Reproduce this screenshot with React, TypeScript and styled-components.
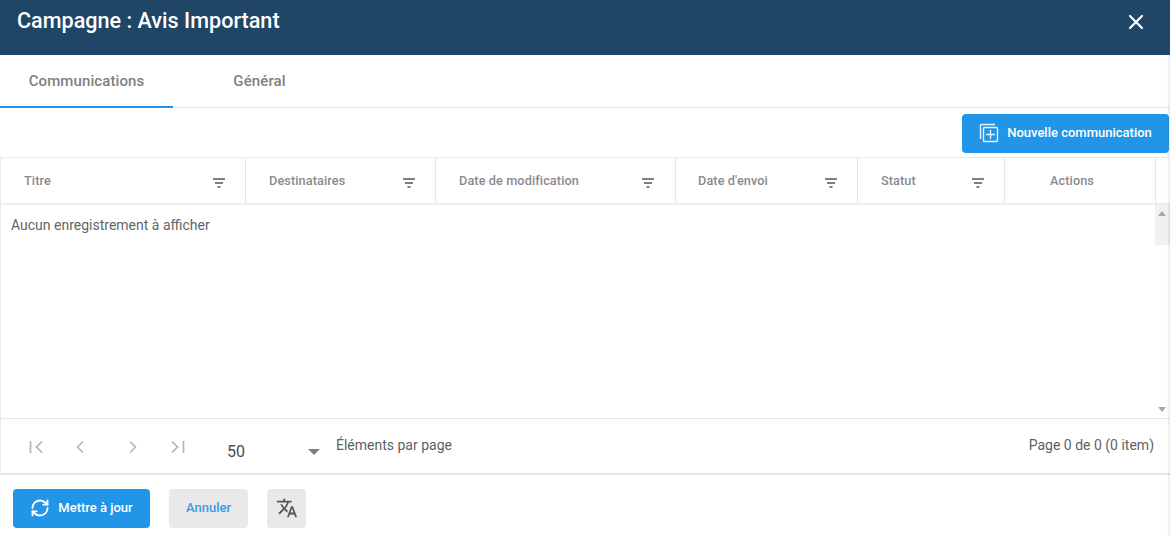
import React from 'react';
import styled, { createGlobalStyle } from 'styled-components';
import { X, RefreshCw, ChevronLeft, ChevronRight } from 'lucide-react';
import { MdTranslate } from 'react-icons/md';

const Global = createGlobalStyle`
  html, body { margin: 0; padding: 0; background: #fff; overflow: hidden; }
  * { box-sizing: border-box; }
  body { font-family: Roboto, "Liberation Sans", sans-serif; }
`;
const Page = styled.div`
  width: 1170px; height: 536px; display: flex; flex-direction: column; position: relative; overflow: hidden; background: #fff;
`;
const EdgeShade = styled.div`
  position: absolute; top: 55px; right: 0; bottom: 0; width: 3px;
  background: linear-gradient(to right, rgba(0,0,0,0), rgba(0,0,0,.1)); pointer-events: none;
`;
const Header = styled.header`
  height: 55px; background: #1f4567; color: #fff; display: flex; justify-content: space-between; align-items: flex-start;
  padding: 8px 22px 0 17px; flex: none;
`;
const Title = styled.h1`margin: 0; font-size: 21.6px; font-weight: 500; line-height: 26px;`;
const CloseBtn = styled.span`display: flex; margin-top: 2px;`;
const Tabs = styled.nav`height: 53px; display: flex; border-bottom: 1px solid #e6e6e6; flex: none;`;
const Tab = styled.div<{ $active?: boolean; $w: number }>`
  width: ${p => p.$w}px; height: 53px; display: flex; align-items: flex-start; justify-content: center; padding-top: 17px;
  font-size: 15px; line-height: 18px; font-weight: 500; color: #80807f; letter-spacing: .1px;
  border-bottom: 2px solid ${p => (p.$active ? '#2196e8' : 'transparent')};
`;
const Toolbar = styled.div`height: 49px; display: flex; justify-content: flex-end; align-items: flex-start; padding: 6px 1px 0 0; flex: none;`;
const BaseButton = styled.button`
  height: 39px; border: 0; border-radius: 4px; display: flex; align-items: center; font-family: inherit; font-weight: 500; padding: 0 0 2px;
`;
const PrimaryButton = styled(BaseButton)<{ $w: number; $gap: number }>`
  width: ${p => p.$w}px; background: #2196e8; color: #fff; font-size: 13px; gap: ${p => p.$gap}px; justify-content: center;
`;
const GreyButton = styled(BaseButton)<{ $w: number }>`
  width: ${p => p.$w}px; background: #e9e9ec; color: #3f97e6; font-size: 13px; justify-content: center;
`;
const Grid = styled.section`
  height: 318px; border: 1px solid #ececec; border-right: 0; border-bottom: 2px solid #e6e6e6; display: flex; flex-direction: column; flex: none;
`;
const HeadRow = styled.div`height: 47px; display: flex; border-bottom: 2px solid #eeeeee; flex: none;`;
const HeadCell = styled.div<{ $w: number; $center?: boolean; $pr: number; $pl: number }>`
  width: ${p => p.$w}px; flex: none; border-right: 1px solid #e6e6e6; display: flex; align-items: flex-start;
  justify-content: ${p => (p.$center ? 'center' : 'space-between')};
  padding: 15px ${p => p.$pr}px 0 ${p => p.$pl}px;
  font-size: 12.7px; line-height: 16px; font-weight: 500; color: #8a8a8e; letter-spacing: .1px;
`;
const FilterIcon = styled.svg`margin-top: 4px; flex: none;`;
const Body = styled.div`height: 214px; display: flex; flex: none; border-bottom: 1px solid #e6e6e6;`;
const Empty = styled.div`flex: 1; padding: 12px 10px; font-size: 14px; line-height: 16px; color: #656565;`;
const Scrollbar = styled.div`width: 15px; flex: none; position: relative; background: #fff;`;
const ScrollThumb = styled.div`position: absolute; top: 0; left: 0; right: 0; height: 40px; background: #f1f1f1;`;
const Arrow = styled.i<{ $down?: boolean }>`
  position: absolute; ${p => (p.$down ? 'bottom: 6px;' : 'top: 6px;')} left: 3px; width: 0; height: 0;
  border-left: 4px solid transparent; border-right: 4px solid transparent;
  ${p => (p.$down ? 'border-top: 5px solid #a8a8a8;' : 'border-bottom: 5px solid #a8a8a8;')}
`;
const Pager = styled.div`flex: 1; display: flex; align-items: flex-start; padding: 17px 16px 0 27px; color: #5f5f5f; font-size: 14px;`;
const PagerIcon = styled.span<{ $w: number }>`width: ${p => p.$w}px; height: 20px; margin-top: 1px; display: flex; align-items: center; color: #b4b4b4; flex: none;`;
const SizeSelect = styled.div`width: 95px; flex: none; display: flex; justify-content: space-between; align-items: center; padding: 4px 2px 0 0; height: 28px; font-size: 16px; color: #4b4b4b; line-height: 20px;`;
const Caret = styled.i`width: 0; height: 0; border-left: 6px solid transparent; border-right: 6px solid transparent; border-top: 6px solid #7f7f7f;`;
const PerPage = styled.span`margin-left: 14px; line-height: 18px;`;
const PageInfo = styled.span`margin-left: auto; line-height: 18px;`;
const Footer = styled.footer`display: flex; align-items: flex-start; gap: 19px; padding: 14px 0 0 13px;`;

const Filter = () => (
  <FilterIcon width="14" height="12" viewBox="0 0 14 12">
    <path d="M1 2h12M3 6h8M5.5 10h3" stroke="#555" strokeWidth="1.6" fill="none" />
  </FilterIcon>
);

const NewIcon = () => (
  <svg width="20" height="20" viewBox="0 0 20 20" fill="none" stroke="#e6f3fd" strokeWidth="1.4">
    <path d="M16 1.5H2.5A1 1 0 0 0 1.5 2.5V16" />
    <rect x="4.5" y="4.5" width="14" height="14" rx="1" />
    <path d="M11.5 7v9M7 11.5h9" />
  </svg>
);

const LastIcon = () => (
  <svg width="16" height="16" viewBox="0 0 16 16" fill="none" stroke="currentColor" strokeWidth="1.7">
    <path d="M2 2.5l5.5 5.5L2 13.5M13.5 2v12" />
  </svg>
);
const FirstIcon = () => (
  <svg width="16" height="16" viewBox="0 0 16 16" fill="none" stroke="currentColor" strokeWidth="1.7">
    <path d="M14 2.5L8.5 8l5.5 5.5M2.5 2v12" />
  </svg>
);

const columns = [
  { t: 'Titre', w: 245, pr: 19, pl: 23 },
  { t: 'Destinataires', w: 190, pr: 19, pl: 23 },
  { t: 'Date de modification', w: 240, pr: 20, pl: 23 },
  { t: "Date d'envoi", w: 182, pr: 19, pl: 22 },
  { t: 'Statut', w: 147, pr: 19, pl: 23 },
];

export default function App() {
  return (
    <Page>
      <Global />
      <Header>
        <Title>Campagne : Avis Important</Title>
        <CloseBtn><X size={24} strokeWidth={2.2} color="#fff" /></CloseBtn>
      </Header>
      <Tabs>
        <Tab $active $w={173}>Communications</Tab>
        <Tab $w={173}>Général</Tab>
      </Tabs>
      <Toolbar>
        <PrimaryButton $w={207} $gap={8}><NewIcon />Nouvelle communication</PrimaryButton>
      </Toolbar>
      <Grid>
        <HeadRow>
          {columns.map(c => (
            <HeadCell key={c.t} $w={c.w} $pr={c.pr} $pl={c.pl}>{c.t}<Filter /></HeadCell>
          ))}
          <HeadCell $w={151} $center $pr={39} $pl={23}>Actions</HeadCell>
        </HeadRow>
        <Body>
          <Empty>Aucun enregistrement à afficher</Empty>
          <Scrollbar>
            <ScrollThumb />
            <Arrow />
            <Arrow $down />
          </Scrollbar>
        </Body>
        <Pager>
          <PagerIcon $w={42}><FirstIcon /></PagerIcon>
          <PagerIcon $w={53}><ChevronLeft size={20} strokeWidth={1.9} /></PagerIcon>
          <PagerIcon $w={47}><ChevronRight size={20} strokeWidth={1.9} /></PagerIcon>
          <PagerIcon $w={57}><LastIcon /></PagerIcon>
          <SizeSelect>
            <span>50</span>
            <Caret />
          </SizeSelect>
          <PerPage>Éléments par page</PerPage>
          <PageInfo>Page 0 de 0 (0 item)</PageInfo>
        </Pager>
      </Grid>
      <Footer>
        <PrimaryButton $w={137} $gap={8}><RefreshCw size={20} strokeWidth={2.2} />Mettre à jour</PrimaryButton>
        <GreyButton $w={79}>Annuler</GreyButton>
        <GreyButton $w={39}><MdTranslate size={22} color="#555" /></GreyButton>
      </Footer>
      <EdgeShade />
    </Page>
  );
}
